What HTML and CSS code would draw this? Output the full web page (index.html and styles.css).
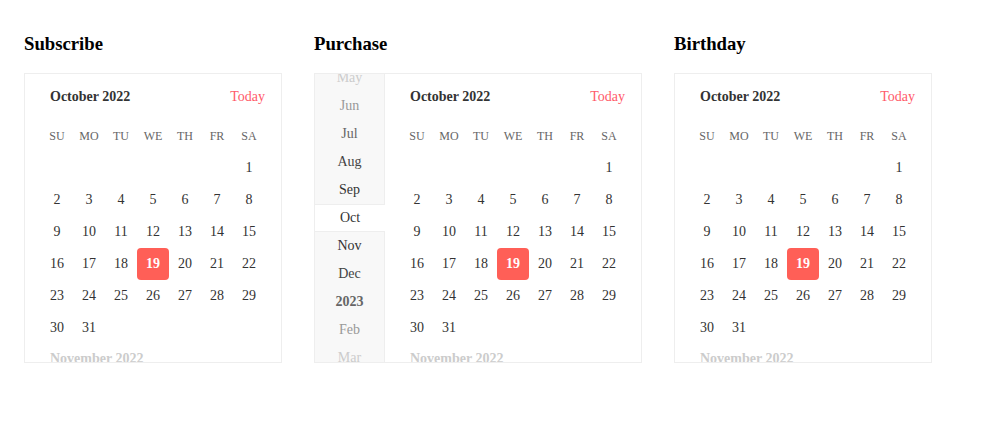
FILE: index.html
```html
<!DOCTYPE html>
<html>
<head>
	<title>Date pickers</title>
	<meta charset="utf-8">
	<link rel="stylesheet" href="styles.css">
</head>
<body>
	<section class="demos">
		<div class="demo">
			<h3>Subscribe</h3>
			<div class="picker">
				<div class="calendar">
					<div class="cal-head"><b>October 2022</b><span class="today">Today</span></div>
					<div class="week"><span>SU</span><span>MO</span><span>TU</span><span>WE</span><span>TH</span><span>FR</span><span>SA</span></div>
					<div class="days">
						<span class="first">1</span><span>2</span><span>3</span><span>4</span><span>5</span><span>6</span><span>7</span><span>8</span><span>9</span><span>10</span><span>11</span><span>12</span><span>13</span><span>14</span><span>15</span><span>16</span><span>17</span><span>18</span><span class="sel">19</span><span>20</span><span>21</span><span>22</span><span>23</span><span>24</span><span>25</span><span>26</span><span>27</span><span>28</span><span>29</span><span>30</span><span>31</span>
					</div>
					<div class="next-month">November 2022</div>
				</div>
			</div>
		</div>

		<div class="demo">
			<h3>Purchase</h3>
			<div class="picker">
				<div class="months">
					<div class="m f4">May</div>
					<div class="m f3">Jun</div>
					<div class="m f2">Jul</div>
					<div class="m f1">Aug</div>
					<div class="m">Sep</div>
					<div class="m cur">Oct</div>
					<div class="m">Nov</div>
					<div class="m f1">Dec</div>
					<div class="m f2 year">2023</div>
					<div class="m f3">Feb</div>
					<div class="m f4">Mar</div>
				</div>
				<div class="calendar">
					<div class="cal-head"><b>October 2022</b><span class="today">Today</span></div>
					<div class="week"><span>SU</span><span>MO</span><span>TU</span><span>WE</span><span>TH</span><span>FR</span><span>SA</span></div>
					<div class="days">
						<span class="first">1</span><span>2</span><span>3</span><span>4</span><span>5</span><span>6</span><span>7</span><span>8</span><span>9</span><span>10</span><span>11</span><span>12</span><span>13</span><span>14</span><span>15</span><span>16</span><span>17</span><span>18</span><span class="sel">19</span><span>20</span><span>21</span><span>22</span><span>23</span><span>24</span><span>25</span><span>26</span><span>27</span><span>28</span><span>29</span><span>30</span><span>31</span>
					</div>
					<div class="next-month">November 2022</div>
				</div>
			</div>
		</div>

		<div class="demo">
			<h3>Birthday</h3>
			<div class="picker">
				<div class="calendar">
					<div class="cal-head"><b>October 2022</b><span class="today">Today</span></div>
					<div class="week"><span>SU</span><span>MO</span><span>TU</span><span>WE</span><span>TH</span><span>FR</span><span>SA</span></div>
					<div class="days">
						<span class="first">1</span><span>2</span><span>3</span><span>4</span><span>5</span><span>6</span><span>7</span><span>8</span><span>9</span><span>10</span><span>11</span><span>12</span><span>13</span><span>14</span><span>15</span><span>16</span><span>17</span><span>18</span><span class="sel">19</span><span>20</span><span>21</span><span>22</span><span>23</span><span>24</span><span>25</span><span>26</span><span>27</span><span>28</span><span>29</span><span>30</span><span>31</span>
					</div>
					<div class="next-month">November 2022</div>
				</div>
			</div>
		</div>
	</section>
</body>
</html>
```

FILE: styles.css
```css
html, body {
	margin: 0;
	padding: 0;
	background: white;
}

body {
	font-family: "Liberation Serif", "Times New Roman", serif;
	color: #333;
}

.demos {
	display: flex;
	gap: 32px;
	padding: 33px 24px;
	align-items: flex-start;
}

.demo h3 {
	margin: 0 0 19px 0;
	font-size: 18.72px;
	line-height: 21px;
	color: #000;
}

.picker {
	display: flex;
	height: 290px;
	box-sizing: border-box;
	border: 1px solid #eee;
	overflow: hidden;
}

/* month wheel on the purchase picker */
.months {
	width: 70px;
	flex: none;
	box-sizing: border-box;
	background-color: #f8f8f8;
	border-right: 1px solid #eee;
}

.months .m {
	height: 28px;
	line-height: 28px;
	text-align: center;
	font-size: 14px;
	color: #333;
}
.months .m:first-child { margin-top: -10px; }
.months .cur {
	background-color: white;
	border-top: 1px solid #eee;
	border-bottom: 1px solid #eee;
	box-sizing: border-box;
	line-height: 26px;
	margin-right: -1px;
}
.months .year { font-weight: bold; }
.months .f1 { color: #444; }
.months .f2 { color: #666; }
.months .f3 { color: #999; }
.months .f4 { color: #ccc; }

.calendar {
	padding: 0 16px;
	width: 224px;
}

.cal-head {
	display: flex;
	justify-content: space-between;
	align-items: center;
	height: 45px;
	margin-bottom: 1px;
	padding-left: 9px;
	font-size: 14px;
}
.cal-head b { color: #333; }
.today { color: #ff5a6a; }

.week, .days {
	display: grid;
	grid-template-columns: repeat(7, 32px);
	grid-auto-rows: 32px;
}

.week span, .days span {
	display: flex;
	align-items: center;
	justify-content: center;
}

.week span {
	font-size: 12px;
	color: #666;
}

.days span {
	font-size: 14px;
	color: #333;
}

.days .first { grid-column-start: 7; }

.days .sel {
	background-color: #ff5f57;
	color: white;
	font-weight: bold;
	border-radius: 4px;
}

.next-month {
	padding: 7px 0 0 9px;
	font-size: 14px;
	font-weight: bold;
	color: #ccc;
}
```
